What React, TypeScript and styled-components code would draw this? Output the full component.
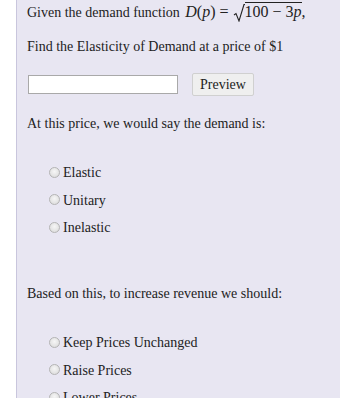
import React from "react";
import styled, { createGlobalStyle } from "styled-components";

const Global = createGlobalStyle`
  html, body { margin: 0; padding: 0; background: #ffffff; }
  body { font-family: "Liberation Serif", "Times New Roman", serif; }
`;

const Page = styled.div`
  margin-left: 16px;
  border-left: 1px solid #c9c6dd;
  background: #e8e6f2;
  padding: 3px 0 0 10px;
  box-sizing: border-box;
  color: #222;
  font-size: 14px;
  line-height: 18px;
  overflow: hidden;
  height: 398px;
`;

const Para = styled.p<{ $mt: number }>`
  margin: ${(p) => p.$mt}px 0 0 0;
  white-space: nowrap;
  height: 18px;
`;

const Math = styled.span`
  font-family: "Liberation Serif", "DejaVu Serif", serif;
  font-size: 16px;
  line-height: 18px;
  margin-left: 2px;
`;

const It = styled.span`
  font-style: italic;
`;

const Radical = styled.svg`
  width: 12px;
  height: 18px;
  vertical-align: -5px;
`;

const Radicand = styled.span`
  border-top: 1px solid #222;
  padding-top: 0px;
`;

const Row = styled.div<{ $mt: number }>`
  display: flex;
  align-items: center;
  gap: 14px;
  margin-top: ${(p) => p.$mt}px;
  padding-left: 1px;
`;

const Input = styled.input`
  width: 150px;
  height: 19px;
  box-sizing: border-box;
  border: 1px solid #a9a9a9;
  background: #fff;
  margin: 0;
  padding: 1px 2px;
`;

const Button = styled.button`
  height: 23px;
  box-sizing: border-box;
  padding: 0 7px;
  border: 1px solid #d0d0d0;
  border-radius: 2px;
  background: #efefef;
  font-family: "Liberation Serif", "Times New Roman", serif;
  font-size: 14px;
  color: #222;
  margin: 0;
`;

const List = styled.div<{ $mt: number }>`
  display: flex;
  flex-direction: column;
  gap: 9.6px;
  margin-top: ${(p) => p.$mt}px;
  padding-left: 22px;
`;

const Option = styled.label`
  display: flex;
  align-items: center;
  gap: 3px;
  white-space: nowrap;
`;

const Radio = styled.input`
  appearance: none;
  -webkit-appearance: none;
  width: 11px;
  height: 11px;
  margin: 0;
  border-radius: 50%;
  border: 1px solid #b4b4b4;
  background: radial-gradient(circle at 50% 40%, #f6f6f6 0%, #e4e4e4 60%, #d6d6d6 100%);
  box-sizing: border-box;
  position: relative;
  top: -1px;
`;

const first = ["Elastic", "Unitary", "Inelastic"];
const second = ["Keep Prices Unchanged", "Raise Prices", "Lower Prices"];

export default function App() {
  return (
    <>
      <Global />
      <Page>
        <Para $mt={0}>
          Given the demand function{" "}
          <Math>
            <It>D</It>(<It>p</It>) ={" "}
            <Radical viewBox="0 0 12 18">
              <path d="M1 11 L3 9.5 L6 17 L11 0.5 L12 0.5" fill="none" stroke="#222" strokeWidth="1.1" />
            </Radical>
            <Radicand>
              100 − 3<It>p</It>
            </Radicand>
            ,
          </Math>
        </Para>
        <Para $mt={17}>Find the Elasticity of Demand at a price of $1</Para>
        <Row $mt={17}>
          <Input type="text" />
          <Button type="button">Preview</Button>
        </Row>
        <Para $mt={19}>At this price, we would say the demand is:</Para>
        <List $mt={31}>
          {first.map((t) => (
            <Option key={t}>
              <Radio type="radio" name="q1" />
              {t}
            </Option>
          ))}
        </List>
        <Para $mt={48}>Based on this, to increase revenue we should:</Para>
        <List $mt={31}>
          {second.map((t) => (
            <Option key={t}>
              <Radio type="radio" name="q2" />
              {t}
            </Option>
          ))}
        </List>
      </Page>
    </>
  );
}
